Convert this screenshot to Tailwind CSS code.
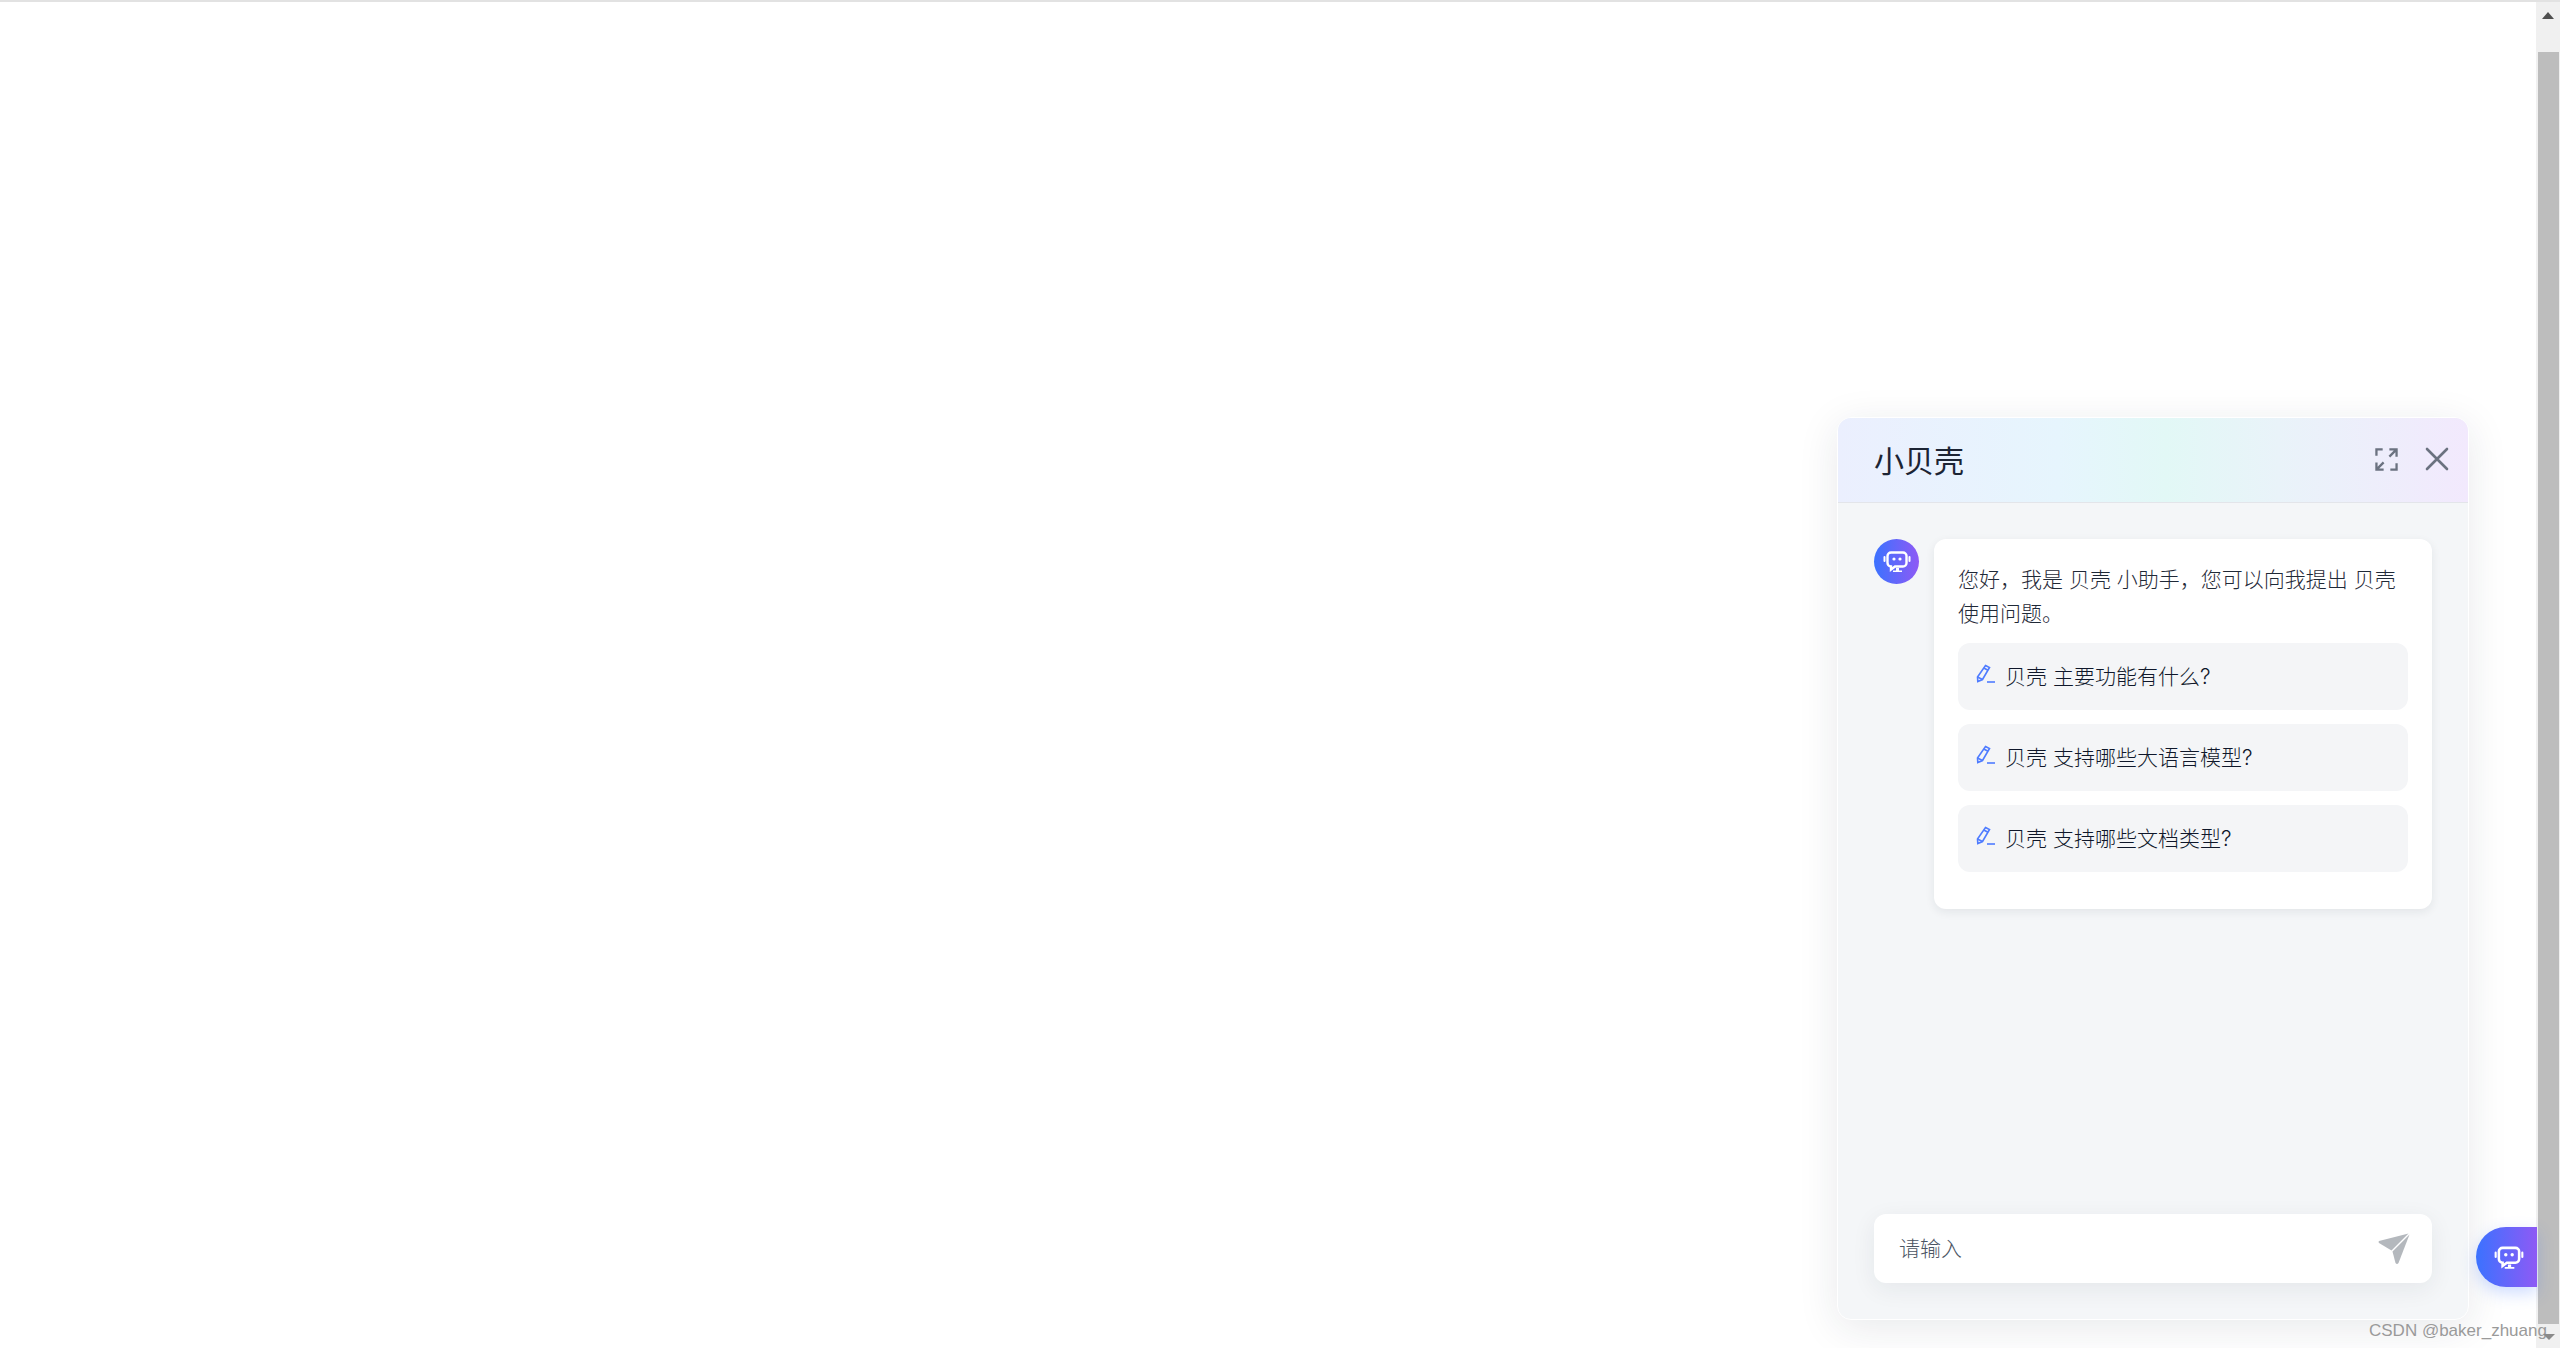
<!DOCTYPE html>
<html lang="zh-CN">
<head>
<meta charset="utf-8">
<title>小贝壳</title>
<script src="https://cdn.jsdelivr.net/npm/@tailwindcss/browser@4"></script>
</head>
<body class="m-0 h-[1348px] w-[2560px] overflow-hidden bg-white font-['Inter','Noto_Sans_CJK_SC',sans-serif]">
<div class="relative flex h-full w-full flex-col">
  <div class="h-[2px] w-full bg-[#e2e2e2]"></div>
  <div class="flex min-h-0 flex-1">
    <main class="relative flex-1"></main>
    <div class="flex w-[24px] flex-col bg-[#f0f0f0]">
      <div class="flex h-[50px] items-start justify-center pt-[10px]">
        <svg width="12" height="7" viewBox="0 0 12 7"><path d="M6 0 12 7H0Z" fill="#505050"/></svg>
      </div>
      <div class="ml-[2px] h-[1272px] w-[21px] bg-[#bdbdbd]"></div>
    </div>
  </div>

  <section class="absolute left-[1837px] top-[417px] flex h-[903px] w-[632px] flex-col overflow-hidden rounded-[14px] border border-white bg-[#f4f6f8] shadow-[0_8px_40px_rgba(31,41,55,0.10)]">
    <header class="flex h-[85px] shrink-0 items-center justify-between border-b border-[#e3e5ea] bg-[linear-gradient(90deg,#ebeffe_0%,#e6f5fd_35%,#e2f8f6_52%,#e9f3f9_70%,#f2e9fd_100%)] pl-[36px] pr-[19px]">
      <h1 class="pt-[2px] text-[30px] font-normal leading-none text-[#1c2434]">小贝壳</h1>
      <div class="mb-[2px] flex items-center gap-[27px]">
        <svg width="23" height="23" viewBox="0 0 24 24" fill="none" stroke="#6b7280" stroke-width="2.400"><path d="M1.500 8V1.500H8M22.500 16v6.500H16"/><path d="M15 1.500h7.500V9M22 2 15 9M9 22.500H1.500V15M2 22 9 15"/></svg>
        <svg width="24" height="24" viewBox="0 0 24 24" fill="none" stroke="#6b7280" stroke-width="2.600" stroke-linecap="round"><path d="M2 2 22 22M22 2 2 22"/></svg>
      </div>
    </header>

    <div class="flex min-h-0 flex-1 flex-col justify-between px-[36px] pb-[36px] pt-[36px]">
      <div class="flex items-start gap-[15px]">
        <div class="flex h-[45px] w-[45px] shrink-0 items-center justify-center rounded-full bg-[linear-gradient(90deg,#3b72ff,#8e5af5)]">
          <svg width="30" height="30" viewBox="0 0 30 30" fill="#fff"><path d="M9 5.500h12a3.500 3.500 0 0 1 3.500 3.500v7a3.500 3.500 0 0 1-3.500 3.500H13l-4 3v-3a3.500 3.500 0 0 1-3.500-3.500V9A3.500 3.500 0 0 1 9 5.500Z" fill="none" stroke="#fff" stroke-width="2.400"/><circle cx="12" cy="12" r="1.600"/><circle cx="18" cy="12" r="1.600"/><rect x="1.500" y="9" width="2" height="6" rx="1"/><rect x="26.500" y="9" width="2" height="6" rx="1"/><path d="M14 21h3v2.500h3V25H11v-1.500h3Z"/></svg>
        </div>
        <div class="flex w-[498px] flex-col rounded-[12px] bg-white px-[24px] pb-[37px] pt-[24px] shadow-[0_3px_10px_rgba(31,41,55,0.08)]">
          <p class="text-[21px] font-light leading-[34px] text-[#1f2937]">您好，我是 贝壳 小助手，您可以向我提出 贝壳 使用问题。</p>
          <div class="mt-[12px] flex flex-col gap-[14px]">
            <button class="flex h-[67px] w-[450px] items-center gap-[9px] rounded-[12px] bg-[#f4f5f7] pl-[18px] text-[21px] font-light text-[#0f172a]">
              <svg class="mb-[6px] shrink-0" width="20" height="20" viewBox="0 0 20 20" fill="none" stroke="#4f7cff" stroke-width="1.600"><path d="M9.500 1.500 13.500 3.500 6.500 15.500 1.800 17.500 1.500 13Z"/><path d="M7.800 4 12 6.300M1.500 13 6.500 15.500"/><path d="M11 18h8"/></svg>
              <span>贝壳 主要功能有什么?</span>
            </button>
            <button class="flex h-[67px] w-[450px] items-center gap-[9px] rounded-[12px] bg-[#f4f5f7] pl-[18px] text-[21px] font-light text-[#0f172a]">
              <svg class="mb-[6px] shrink-0" width="20" height="20" viewBox="0 0 20 20" fill="none" stroke="#4f7cff" stroke-width="1.600"><path d="M9.500 1.500 13.500 3.500 6.500 15.500 1.800 17.500 1.500 13Z"/><path d="M7.800 4 12 6.300M1.500 13 6.500 15.500"/><path d="M11 18h8"/></svg>
              <span>贝壳 支持哪些大语言模型?</span>
            </button>
            <button class="flex h-[67px] w-[450px] items-center gap-[9px] rounded-[12px] bg-[#f4f5f7] pl-[18px] text-[21px] font-light text-[#0f172a]">
              <svg class="mb-[6px] shrink-0" width="20" height="20" viewBox="0 0 20 20" fill="none" stroke="#4f7cff" stroke-width="1.600"><path d="M9.500 1.500 13.500 3.500 6.500 15.500 1.800 17.500 1.500 13Z"/><path d="M7.800 4 12 6.300M1.500 13 6.500 15.500"/><path d="M11 18h8"/></svg>
              <span>贝壳 支持哪些文档类型?</span>
            </button>
          </div>
        </div>
      </div>

      <div class="flex h-[69px] w-[558px] items-center justify-between rounded-[12px] bg-white pl-[25px] pr-[22px] shadow-[0_6px_24px_rgba(31,41,55,0.07)]">
        <span class="text-[21px] font-light text-[#4b5563]">请输入</span>
        <svg width="32" height="32" viewBox="0 0 32 32" fill="#b4b8bd"><path d="M30.500 .5 1 8Q0 9 1 10L13.500 17.500Z"/><path d="M31.500 1.500 20.500 30Q19 32 17.500 30L14.500 18.500Z"/></svg>
      </div>
    </div>
  </section>

  <button class="absolute left-[2476px] top-[1227px] flex h-[60px] w-[61px] items-center justify-center rounded-l-full bg-[linear-gradient(90deg,#3b72ff,#8e5af5)] pl-[4px] pt-[2px] shadow-[0_6px_16px_rgba(59,114,255,0.25)]">
    <svg width="32" height="32" viewBox="0 0 30 30" fill="#fff"><path d="M9 5.500h12a3.500 3.500 0 0 1 3.500 3.500v7a3.500 3.500 0 0 1-3.500 3.500H13l-4 3v-3a3.500 3.500 0 0 1-3.500-3.500V9A3.500 3.500 0 0 1 9 5.500Z" fill="none" stroke="#fff" stroke-width="2.400"/><circle cx="12" cy="12" r="1.600"/><circle cx="18" cy="12" r="1.600"/><rect x="1.500" y="9" width="2" height="6" rx="1"/><rect x="26.500" y="9" width="2" height="6" rx="1"/><path d="M14 21h3v2.500h3V25H11v-1.500h3Z"/></svg>
  </button>

  <div class="absolute left-[2369px] top-[1321px] font-['Liberation_Sans',sans-serif] text-[17px] leading-[20px] text-[#9a9a9a]">CSDN @baker_zhuang</div>
  <svg class="absolute left-[2543px] top-[1334px]" width="12" height="6" viewBox="0 0 12 6"><path d="M0 0H12L6 6Z" fill="#8a8a8a"/></svg>
</div>
</body>
</html>
